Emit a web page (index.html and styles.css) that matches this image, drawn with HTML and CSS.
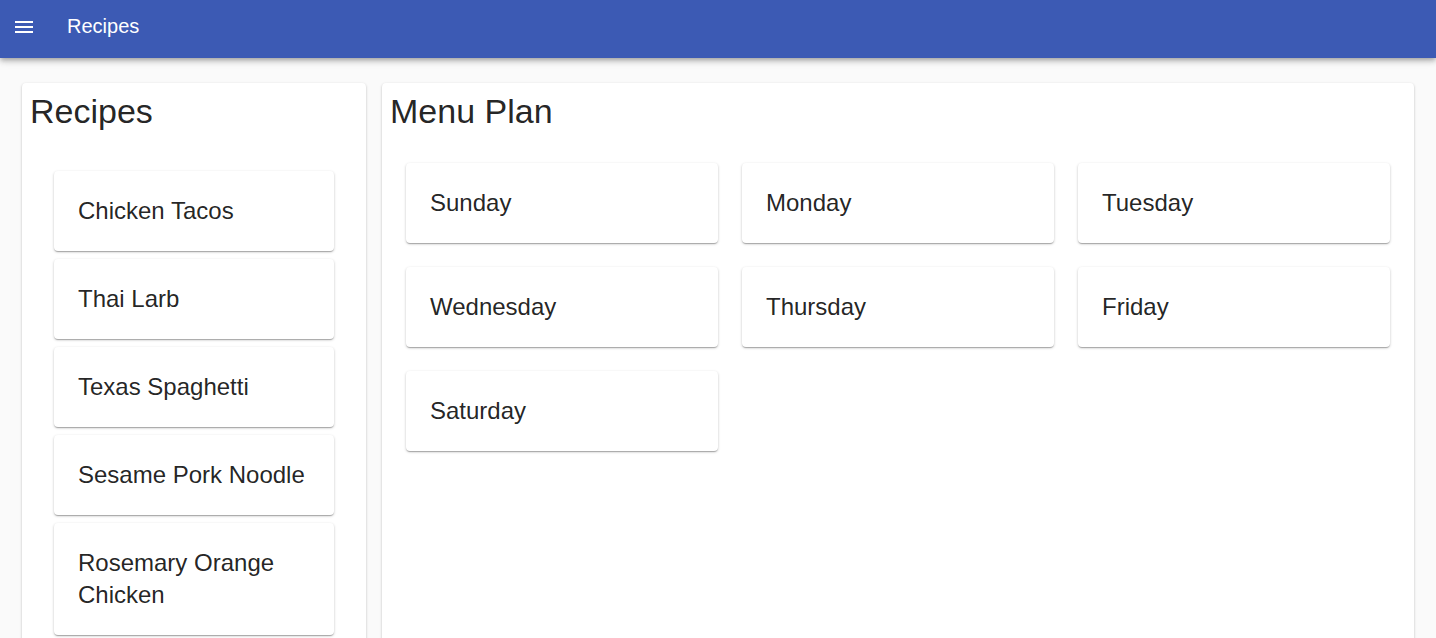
FILE: index.html
```html
<!DOCTYPE html>
<html>
<head>
<meta charset="utf-8">
<link rel="stylesheet" href="styles.css">
</head>
<body>
<header class="appbar">
  <button class="menu-btn" aria-label="menu">
    <svg viewBox="0 0 24 24" width="24" height="24"><path fill="#fff" d="M3 18h18v-2H3v2zm0-5h18v-2H3v2zm0-7v2h18V6H3z"/></svg>
  </button>
  <div class="appbar-title">Recipes</div>
</header>
<main class="content">
  <section class="paper recipes">
    <h2 class="paper-title">Recipes</h2>
    <div class="recipe-list">
      <div class="card">Chicken Tacos</div>
      <div class="card">Thai Larb</div>
      <div class="card">Texas Spaghetti</div>
      <div class="card">Sesame Pork Noodle</div>
      <div class="card">Rosemary Orange Chicken</div>
    </div>
  </section>
  <section class="paper menu">
    <h2 class="paper-title">Menu Plan</h2>
    <div class="day-grid">
      <div class="card">Sunday</div>
      <div class="card">Monday</div>
      <div class="card">Tuesday</div>
      <div class="card">Wednesday</div>
      <div class="card">Thursday</div>
      <div class="card">Friday</div>
      <div class="card">Saturday</div>
    </div>
  </section>
</main>
</body>
</html>
```
FILE: styles.css
```css
* { box-sizing: border-box; }
html, body { margin: 0; padding: 0; }
body {
  background: #fafafa;
  font-family: "Liberation Sans", Arial, sans-serif;
  color: rgba(0,0,0,0.87);
  overflow: hidden;
}
.appbar {
  height: 58px;
  background: #3c5ab4;
  display: flex;
  align-items: center;
  padding: 0 12px;
  box-shadow: 0 2px 4px -1px rgba(0,0,0,0.2), 0 4px 5px 0 rgba(0,0,0,0.14), 0 1px 10px 0 rgba(0,0,0,0.12);
  position: relative;
  z-index: 2;
}
.menu-btn {
  background: none;
  border: 0;
  padding: 0;
  width: 24px;
  height: 24px;
  display: flex;
  margin-top: -5px;
}
.appbar-title {
  color: #fff;
  font-size: 20px;
  margin-left: 31px;
  line-height: 24px;
  margin-top: -6px;
}
.content {
  display: flex;
  gap: 16px;
  padding: 25px 22px 0;
  align-items: stretch;
}
.paper {
  background: #fff;
  border-radius: 4px;
  box-shadow: 0 1px 3px 0 rgba(0,0,0,0.2), 0 1px 1px 0 rgba(0,0,0,0.14), 0 2px 1px -1px rgba(0,0,0,0.12);
  padding: 7px 8px 40px;
}
.recipes { width: 344px; flex: none; }
.menu { flex: 1; }
.paper-title {
  margin: 0;
  font-size: 34px;
  font-weight: 400;
  line-height: 42px;
}
.recipe-list {
  display: flex;
  flex-direction: column;
  gap: 8px;
  padding: 39px 24px 0;
}
.card {
  background: #fff;
  border-radius: 4px;
  box-shadow: 0 1px 3px 0 rgba(0,0,0,0.2), 0 1px 1px 0 rgba(0,0,0,0.14), 0 2px 1px -1px rgba(0,0,0,0.12);
  padding: 24px;
  font-size: 24px;
  line-height: 32px;
}
.day-grid {
  display: grid;
  grid-template-columns: repeat(3, 1fr);
  gap: 24px;
  padding: 31px 16px 0;
}
```
